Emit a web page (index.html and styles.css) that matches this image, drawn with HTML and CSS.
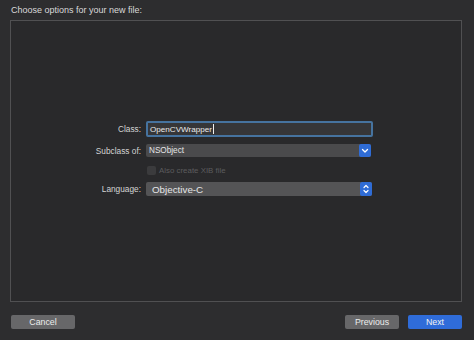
FILE: index.html
```html
<!DOCTYPE html>
<html>
<head>
<meta charset="utf-8">
<link rel="stylesheet" href="styles.css">
</head>
<body>
<div class="window">
  <div class="title">Choose options for your new file:</div>
  <div class="panel">
    <div class="form">
      <div class="row row-class">
        <div class="label">Class:</div>
        <div class="textfield"><span class="value">OpenCVWrapper</span><span class="caret"></span></div>
      </div>
      <div class="row row-subclass">
        <div class="label">Subclass of:</div>
        <div class="popup popup-sub">
          <span class="value">NSObject</span>
          <span class="arrow">
            <svg width="12" height="13" viewBox="0 0 12 13"><path d="M3.5 5.5 L6 8 L8.5 5.5" fill="none" stroke="#fff" stroke-width="1.3" stroke-linecap="round" stroke-linejoin="round"/></svg>
          </span>
        </div>
      </div>
      <div class="row row-check">
        <div class="label"></div>
        <div class="check"><span class="box"></span><span class="check-text">Also create XIB file</span></div>
      </div>
      <div class="row row-lang">
        <div class="label">Language:</div>
        <div class="popup popup-lang">
          <span class="value lang-value">Objective-C</span>
          <span class="arrow">
            <svg width="12" height="14" viewBox="0 0 12 14"><path d="M4 5.5 L6 3.5 L8 5.5 M4 8.5 L6 10.5 L8 8.5" fill="none" stroke="#fff" stroke-width="1.2" stroke-linecap="round" stroke-linejoin="round"/></svg>
          </span>
        </div>
      </div>
    </div>
  </div>
  <div class="footer">
    <button class="btn btn-cancel">Cancel</button>
    <div class="spacer"></div>
    <button class="btn btn-prev">Previous</button>
    <button class="btn btn-next">Next</button>
  </div>
</div>
</body>
</html>
```

FILE: styles.css
```css
html, body {
  margin: 0;
  padding: 0;
  background: #2d2d2f;
}
body {
  font-family: "Liberation Sans", Arial, sans-serif;
  color: #dcdcdc;
}
.window {
  width: 474px;
  height: 340px;
  box-sizing: border-box;
  padding: 0 12px 0 10px;
  display: flex;
  flex-direction: column;
}
.title {
  height: 20px;
  line-height: 20px;
  font-size: 9px;
  padding-left: 1px;
  color: #d9d9d9;
}
.panel {
  height: 282px;
  box-sizing: border-box;
  border: 1px solid #505052;
  background: #29292b;
  padding-top: 100px;
}
.form {
  display: flex;
  flex-direction: column;
}
.row {
  display: flex;
  align-items: center;
}
.label {
  width: 130px;
  text-align: right;
  font-size: 8.3px;
  color: #d4d4d4;
  margin-right: 5px;
  flex: none;
}
.row-class { height: 16px; }
.row-subclass { height: 13px; margin-top: 7px; }
.row-check { height: 14px; margin-top: 6px; }
.row-lang { height: 14px; margin-top: 5px; }

.textfield {
  width: 227px;
  height: 16px;
  box-sizing: border-box;
  border: 2px solid #46739f;
  border-radius: 2px;
  background: #363638;
  display: flex;
  align-items: center;
  padding-left: 2px;
  font-size: 8.1px;
  color: #ececec;
}
.caret {
  width: 1px;
  height: 10px;
  background: #f0f0f0;
  margin-left: 1px;
}
.popup {
  height: 100%;
  box-sizing: border-box;
  background: #4a4a4c;
  border-radius: 2px;
  display: flex;
  align-items: center;
  justify-content: space-between;
  padding-left: 3px;
  font-size: 8.2px;
  color: #e6e6e6;
}
.popup-sub { width: 225px; }
.popup-lang { width: 226px; background: #545456; padding-left: 6px; }
.lang-value { font-size: 9.8px; }
.arrow {
  width: 12px;
  height: 100%;
  background: #2f6cd6;
  border-radius: 2px;
  display: flex;
  align-items: center;
  justify-content: center;
}
.arrow svg { display: block; }
.check {
  display: flex;
  align-items: center;
  padding-left: 1px;
}
.box {
  width: 9px;
  height: 9px;
  border-radius: 2px;
  background: #3b3b3d;
  margin-right: 3px;
}
.check-text {
  font-size: 7.9px;
  color: #5c5c5e;
}
.footer {
  display: flex;
  align-items: flex-start;
  padding-top: 13px;
  padding-left: 1px;
}
.spacer { flex: 1; }
.btn {
  height: 14px;
  border: none;
  border-radius: 2px;
  padding: 0;
  font-family: "Liberation Sans", Arial, sans-serif;
  font-size: 8.8px;
  color: #ececec;
  background: #676769;
  line-height: 14px;
}
.btn-cancel { width: 64px; }
.btn-prev { width: 54px; }
.btn-next { width: 54px; margin-left: 9px; background: #2f6cd9; color: #f2f2f2; }
```
